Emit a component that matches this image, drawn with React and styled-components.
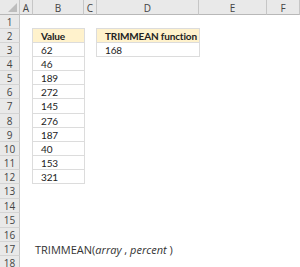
import React from 'react';
import styled, { createGlobalStyle } from 'styled-components';

const GlobalStyle = createGlobalStyle`
  html, body {
    margin: 0;
    padding: 0;
    background: #ffffff;
  }
  body {
    width: 300px;
    height: 267px;
    overflow: hidden;
  }
`;

const COLS = ['A', 'B', 'C', 'D', 'E', 'F'];
const COL_WIDTHS = '20px 13px 51px 13px 102px 68px 1fr';
// excel rounds row heights at this zoom, so a few rows are a pixel taller
const ROW_HEIGHTS = [14, 14, 14, 14, 14, 14, 15, 14, 14, 14, 14, 14, 15, 14, 15, 14, 14, 14];

const headBg = '#e9e9e9';
const headLine = '#c6c6c6';
const tableLine = '#dcdcdc';
const headerFill = '#fff2cc';

const Sheet = styled.div`
  display: grid;
  grid-template-columns: ${COL_WIDTHS};
  grid-template-rows: 15px ${ROW_HEIGHTS.map(h => `${h}px`).join(' ')};
  width: 300px;
  height: 267px;
  overflow: hidden;
  font-family: Lato, 'Liberation Sans', sans-serif;
  font-size: 10px;
  color: #222;
`;

const Corner = styled.div`
  position: relative;
  background: ${headBg};
  border-right: 1px solid ${headLine};
  border-bottom: 1px solid #b8b8b8;

  &::after {
    content: '';
    position: absolute;
    right: 2px;
    bottom: 2px;
    width: 0;
    height: 0;
    border-left: 9px solid transparent;
    border-bottom: 9px solid #bdbdbd;
  }
`;

const ColHead = styled.div`
  display: flex;
  align-items: center;
  justify-content: center;
  background: ${headBg};
  border-right: 1px solid ${headLine};
  border-bottom: 1px solid #b8b8b8;
  font-family: 'Open Sans', 'Noto Sans', sans-serif;
  font-size: 10px;
  color: #444;
  padding-top: 1px;
`;

const RowHead = styled.div`
  display: flex;
  align-items: center;
  justify-content: center;
  background: ${headBg};
  border-right: 1px solid ${headLine};
  border-bottom: 1px solid #d4d4d4;
  font-family: 'Open Sans', 'Noto Sans', sans-serif;
  font-size: 10px;
  color: #444;
`;

const Cell = styled.div`
  display: flex;
  align-items: center;
  min-width: 0;
  white-space: nowrap;
  overflow: visible;
  padding-left: 8px;
  letter-spacing: -0.15px;
  background: ${p => (p.$head ? headerFill : 'transparent')};
  font-weight: ${p => (p.$head ? 700 : 400)};
  ${p =>
    p.$boxed &&
    `
    border-left: 1px solid ${tableLine};
    border-right: 1px solid ${tableLine};
    border-bottom: 1px solid ${tableLine};
    margin-left: -1px;
    margin-right: -1px;
  `}
  ${p => p.$top && `border-top: 1px solid ${tableLine}; margin-top: -1px;`}
`;

const Syntax = styled.div`
  grid-column: 2 / -1;
  display: flex;
  align-items: center;
  padding-left: 15px;
  font-family: 'Open Sans', 'Noto Sans', sans-serif;
  font-size: 11px;
  color: #333;
  white-space: pre;

  em {
    font-style: italic;
  }
`;

const values = [62, 46, 189, 272, 145, 276, 187, 40, 153, 321];

const cellsFor = row => {
  const out = {};
  if (row === 2) {
    out.B = { text: 'Value', head: true, boxed: true, top: true };
    out.D = { text: 'TRIMMEAN function', head: true, boxed: true, top: true };
  }
  if (row >= 3 && row <= 12) {
    out.B = { text: String(values[row - 3]), boxed: true };
  }
  if (row === 3) {
    out.D = { text: '168', boxed: true };
  }
  return out;
};

export default function App() {
  const rows = Array.from({ length: 18 }, (_, i) => i + 1);

  return (
    <>
      <GlobalStyle />
      <Sheet>
        <Corner />
        {COLS.map(c => (
          <ColHead key={c}>{c}</ColHead>
        ))}
        {rows.map(r => {
          if (r === 17) {
            return (
              <React.Fragment key={r}>
                <RowHead>{r}</RowHead>
                <Syntax>
                  TRIMMEAN(<em>array</em> , <em>percent</em> )
                </Syntax>
              </React.Fragment>
            );
          }
          const data = cellsFor(r);
          return (
            <React.Fragment key={r}>
              <RowHead>{r}</RowHead>
              {COLS.map(c => {
                const d = data[c];
                return d ? (
                  <Cell key={c} $head={d.head} $boxed={d.boxed} $top={d.top}>
                    {d.text}
                  </Cell>
                ) : (
                  <Cell key={c} />
                );
              })}
            </React.Fragment>
          );
        })}
      </Sheet>
    </>
  );
}
